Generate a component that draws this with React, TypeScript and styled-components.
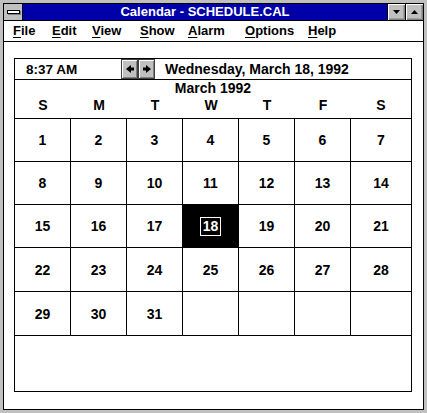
import React from 'react'
import styled, { createGlobalStyle } from 'styled-components'

const GlobalStyle = createGlobalStyle`
  html, body {
    margin: 0;
    padding: 0;
    background: #c0c0c0;
  }
  * {
    box-sizing: border-box;
  }
`

const mark = 'linear-gradient(#202020, #202020)'

const Frame = styled.div`
  width: 427px;
  height: 413px;
  padding: 3px;
  background:
    ${mark} 22px 0 / 1px 3px no-repeat,
    ${mark} right 22px top 0 / 1px 3px no-repeat,
    ${mark} 22px bottom / 1px 3px no-repeat,
    ${mark} right 22px bottom 0 / 1px 3px no-repeat,
    ${mark} 0 22px / 3px 1px no-repeat,
    ${mark} right 0 top 22px / 3px 1px no-repeat,
    ${mark} 0 bottom 22px / 3px 1px no-repeat,
    ${mark} right 0 bottom 22px / 3px 1px no-repeat,
    #c0c0c0;
  font-family: 'Liberation Sans', Arial, sans-serif;
  font-weight: bold;
  color: #000;
`

const Inner = styled.div`
  height: 100%;
  border: 1px solid #000;
  display: flex;
  flex-direction: column;
`

const TitleRow = styled.div`
  height: 17px;
  display: flex;
  border-bottom: 1px solid #000;
`

const SysMenu = styled.div`
  width: 19px;
  border-right: 1px solid #000;
  background: #c0c0c0;
  display: flex;
  align-items: center;
  justify-content: center;
`

const SysBar = styled.span`
  width: 13px;
  height: 4px;
  background: #fff;
  border: 1px solid #000;
  box-shadow: 1px 1px 0 #808080;
`

const TitleBar = styled.div`
  flex: 1;
  background: #0000a8;
  color: #fff;
  font-size: 13px;
  line-height: 16px;
  text-align: center;
`

const WinButton = styled.div`
  width: 18px;
  border-left: 1px solid #000;
  background: #c0c0c0;
  box-shadow: inset 1px 1px 0 #fff, inset -1px -1px 0 #808080, inset -2px -2px 0 #a0a0a0;
  display: flex;
  align-items: center;
  justify-content: center;
`

const MenuBar = styled.div`
  height: 21px;
  border-bottom: 1px solid #000;
  background: #fff;
  display: grid;
  grid-template-columns: 39px 40px 48px 48px 57px 63px auto;
  align-items: center;
  padding-left: 9px;
  font-size: 13px;
  line-height: 20px;
`

const MenuItem = styled.span`
  white-space: nowrap;
`

const Key = styled.span`
  text-decoration: underline;
  text-underline-offset: 2px;
  text-decoration-thickness: 1px;
`

const Client = styled.div`
  flex: 1;
  background: #fff;
  padding: 16px 11px 17px 10px;
  display: flex;
`

const CalBox = styled.div`
  flex: 1;
  border: 1px solid #000;
  display: flex;
  flex-direction: column;
`

const TimeRow = styled.div`
  height: 21px;
  border-bottom: 1px solid #000;
  display: flex;
  align-items: center;
  font-size: 13.5px;
`

const Time = styled.span`
  width: 106px;
  padding-left: 11px;
`

const ArrowButton = styled.div`
  width: 17px;
  height: 20px;
  background: #c0c0c0;
  border: 1px solid #404040;
  box-shadow: inset 1px 1px 0 #fff, inset -1px -1px 0 #808080;
  display: flex;
  align-items: center;
  justify-content: center;
`

const DateText = styled.span`
  margin-left: 10px;
  font-size: 14px;
`

const MonthTitle = styled.div`
  height: 17px;
  line-height: 17px;
  text-align: center;
  font-size: 14px;
`

const Columns = styled.div`
  display: grid;
  grid-template-columns: repeat(6, 56px) 1fr;
`

const Headers = styled(Columns)`
  height: 21px;
  line-height: 17px;
  font-size: 14px;
  text-align: center;
`

const Days = styled(Columns)`
  grid-template-rows: 43px 43px 43px 44px 44px;
`

const Cell = styled.div<{ $last: boolean; $selected: boolean }>`
  border-top: 1px solid #000;
  border-right: ${({ $last }) => ($last ? 'none' : '1px solid #000')};
  background: ${({ $selected }) => ($selected ? '#000' : '#fff')};
  color: ${({ $selected }) => ($selected ? '#fff' : '#000')};
  display: flex;
  align-items: center;
  justify-content: center;
  font-size: 14px;
`

const SelectedNum = styled.span`
  border: 1px solid #fff;
  padding: 0 2px;
  line-height: 17px;
`

const Blank = styled.div`
  flex: 1;
  border-top: 1px solid #000;
`

const menus = ['File', 'Edit', 'View', 'Show', 'Alarm', 'Options', 'Help']
const weekdays = ['S', 'M', 'T', 'W', 'T', 'F', 'S']

// march 1992 starts on a sunday
const cells: (number | null)[] = Array.from({ length: 35 }, (_, i) => (i < 31 ? i + 1 : null))

function Triangle({ up }: { up?: boolean }) {
  return (
    <svg width="7" height="4" viewBox="0 0 7 4">
      <polygon points={up ? '0,4 7,4 3.5,0' : '0,0 7,0 3.5,4'} fill="#000" />
    </svg>
  )
}

function Arrow({ right }: { right?: boolean }) {
  return (
    <svg width="8" height="8" viewBox="0 0 8 8" style={right ? { transform: 'scaleX(-1)' } : undefined}>
      <polygon points="0,4 5,0 5,2.5 8,2.5 8,5.5 5,5.5 5,8" fill="#000" />
    </svg>
  )
}

export default function App() {
  return (
    <>
      <GlobalStyle />
      <Frame>
        <Inner>
          <TitleRow>
            <SysMenu>
              <SysBar />
            </SysMenu>
            <TitleBar>Calendar - SCHEDULE.CAL</TitleBar>
            <WinButton>
              <Triangle />
            </WinButton>
            <WinButton>
              <Triangle up />
            </WinButton>
          </TitleRow>
          <MenuBar>
            {menus.map(m => (
              <MenuItem key={m}>
                <Key>{m[0]}</Key>
                {m.slice(1)}
              </MenuItem>
            ))}
          </MenuBar>
          <Client>
            <CalBox>
              <TimeRow>
                <Time>8:37 AM</Time>
                <ArrowButton>
                  <Arrow />
                </ArrowButton>
                <ArrowButton>
                  <Arrow right />
                </ArrowButton>
                <DateText>Wednesday, March 18, 1992</DateText>
              </TimeRow>
              <MonthTitle>March 1992</MonthTitle>
              <Headers>
                {weekdays.map((d, i) => (
                  <span key={i}>{d}</span>
                ))}
              </Headers>
              <Days>
                {cells.map((n, i) => (
                  <Cell key={i} $last={i % 7 === 6} $selected={n === 18}>
                    {n === 18 ? <SelectedNum>{n}</SelectedNum> : n}
                  </Cell>
                ))}
              </Days>
              <Blank />
            </CalBox>
          </Client>
        </Inner>
      </Frame>
    </>
  )
}
